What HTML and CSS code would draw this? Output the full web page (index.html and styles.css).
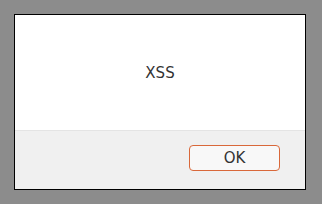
FILE: index.html
```html
<!DOCTYPE html>
<html lang="en">
<head>
    <meta charset="UTF-8">
    <title>Alert</title>
    <link rel="stylesheet" href="styles.css">
</head>
<body>
    <div class="dialog">
        <div class="msg">XSS</div>
        <div class="footer">
            <button class="ok-btn">OK</button>
        </div>
    </div>
</body>
</html>
```

FILE: styles.css
```css
*{
    margin:0;
    padding:0;
    box-sizing:border-box;
}

body{
    background-color:#8c8c8c;
    padding:14px 16px 14px 14px;
    font-family:"DejaVu Sans", sans-serif;
}

.dialog{
    width:292px;
    height:176px;
    background:#ffffff;
    border:1px solid #000;
    display:flex;
    flex-direction:column;
}

.msg{
    height:115px;
    display:flex;
    justify-content:center;
    align-items:center;
    font-size:15px;
    color:#333;
}

.footer{
    flex:1;
    background:#f0f0f0;
    border-top:1px solid #e4e4e4;
    display:flex;
    justify-content:flex-end;
    align-items:flex-start;
    padding:14px 25px 0 0;
}

.ok-btn{
    width:91px;
    height:26px;
    border:1px solid #d9683a;
    border-radius:4px;
    background:#f8f8f8;
    font-family:"DejaVu Sans", sans-serif;
    font-size:15px;
    color:#333;
}
```
